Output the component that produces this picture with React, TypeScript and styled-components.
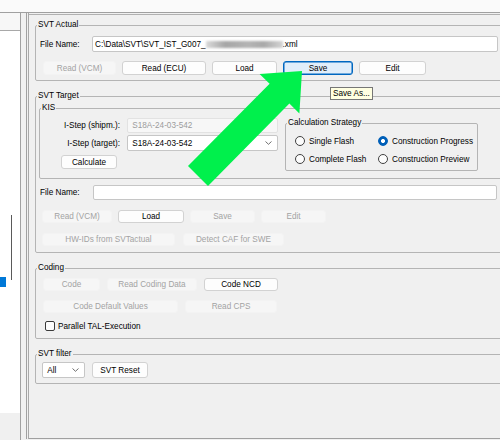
import React from 'react';
import styled, { createGlobalStyle } from 'styled-components';

const GlobalStyle = createGlobalStyle`
  html, body {
    margin: 0;
    padding: 0;
    background: #f0f0f0;
  }
  body {
    font-family: "Liberation Sans", Arial, sans-serif;
    font-size: 8.2px;
    color: #000;
  }
  * {
    box-sizing: border-box;
  }
`;

const Screen = styled.div`
  position: relative;
  width: 500px;
  height: 440px;
  overflow: hidden;
  background: #f0f0f0;
  display: flex;
  flex-direction: column;
`;

const TopBar = styled.div`
  flex: none;
  height: 13px;
  background: #fafafa;
  border-bottom: 1px solid #a0a0a0;
`;

const Workspace = styled.div`
  flex: 1;
  min-height: 0;
  display: flex;
`;

const LeftPane = styled.div`
  flex: none;
  width: 21px;
  border-right: 1px solid #a0a0a0;
  display: flex;
  flex-direction: column;
`;

const LeftHeader = styled.div`
  height: 18px;
  background: #f7f7f7;
  border-bottom: 1px solid #a8a8a8;
`;

const LeftList = styled.div`
  height: 382px;
  background: #fff;
  padding-top: 184px;
`;

const TreeLine = styled.div`
  margin-left: 11px;
  width: 1px;
  height: 65px;
  background: #5a5a5a;
`;

const SelectedItem = styled.div`
  margin-top: -3px;
  width: 6px;
  height: 10px;
  background: #0078d7;
`;

const Splitter = styled.div`
  flex: none;
  width: 5px;
`;

const MainPanel = styled.div`
  flex: none;
  width: 500px;
  height: 426px;
  padding: 7px 0 0 9px;
  display: flex;
  flex-direction: column;
  gap: 10px;
  box-shadow: inset 1px 0 0 #a0a0a0, inset 2px 0 0 #f0f0f0, inset 3px 0 0 #a8a8a8,
    inset 0 1px 0 #f0f0f0, inset 0 2px 0 #b0b0b0, inset 0 -1px 0 #a0a0a0;
`;

const Group = styled.fieldset<{ $w?: number }>`
  margin: 0;
  padding: 0;
  min-width: 0;
  border: 1px solid #b4b4b4;
  border-radius: 2px;
  ${p => (p.$w ? `width: ${p.$w}px; flex: none;` : '')}
`;

const Legend = styled.legend`
  margin-left: 1px;
  padding: 0 1px;
  height: 10px;
  line-height: 10px;
`;

const GroupBody = styled.div<{ $pad: string }>`
  padding: ${p => p.$pad};
`;

const FieldRow = styled.div<{ $mt?: number; $pl?: number }>`
  display: flex;
  align-items: center;
  margin-top: ${p => p.$mt ?? 0}px;
  padding-left: ${p => p.$pl ?? 0}px;
`;

const FieldLabel = styled.span<{ $w: number }>`
  flex: none;
  width: ${p => p.$w}px;
`;

const TextBox = styled.div<{ $w: number; $h: number; $disabled?: boolean }>`
  flex: none;
  width: ${p => p.$w}px;
  height: ${p => p.$h}px;
  display: flex;
  align-items: center;
  padding-left: 2px;
  white-space: nowrap;
  overflow: hidden;
  border-radius: 2px;
  background: ${p => (p.$disabled ? '#f7f7f7' : '#fff')};
  border: 1px solid ${p => (p.$disabled ? '#e2e2e2' : '#c6c6c6')};
  color: ${p => (p.$disabled ? '#9c9c9c' : '#000')};
`;

const Blurred = styled.span`
  display: inline-block;
  width: 77px;
  height: 7px;
  background: linear-gradient(90deg, #dadada, #a6a6a6 25%, #b4b4b4 55%, #a9a9a9 75%, #d4d4d4);
  filter: blur(1.2px);
`;

const ButtonRow = styled.div<{ $mt?: number; $pl?: number; $gap?: number }>`
  display: flex;
  gap: ${p => p.$gap ?? 6}px;
  margin-top: ${p => p.$mt ?? 0}px;
  padding-left: ${p => p.$pl ?? 0}px;
`;

const Btn = styled.button<{ $w: number; $h?: number; $focus?: boolean }>`
  flex: none;
  width: ${p => p.$w}px;
  height: ${p => p.$h ?? 13}px;
  margin: 0;
  padding: 0;
  font: inherit;
  color: #000;
  background: #fdfdfd;
  border: 1px solid #d2d2d2;
  border-radius: 3px;
  &:disabled {
    color: #a3a3a3;
    background: #f6f6f6;
    border-color: #f3f3f3;
  }
  ${p =>
    p.$focus
      ? `background: #e1eefa; border-color: #0067c0; box-shadow: inset 0 0 0 0.5px #0067c0;`
      : ''}
`;

const KisLayout = styled.div`
  display: flex;
  align-items: flex-start;
  gap: 7px;
`;

const KisGrid = styled.div`
  display: grid;
  grid-template-columns: 81px 151px;
  column-gap: 6px;
  row-gap: 2px;
  align-items: center;
`;

const KisLabel = styled.span`
  text-align: right;
  padding-right: 1px;
`;

const ComboBox = styled(TextBox)`
  justify-content: space-between;
  padding: 0 5px 0 2px;
`;

const CalcButton = styled(Btn)`
  grid-column: 1;
  justify-self: end;
  margin: 2px 4px 0 0;
`;

const RadioGrid = styled.div`
  display: grid;
  grid-template-columns: 83px auto;
  grid-auto-rows: 18px;
  align-items: center;
`;

const RadioItem = styled.label`
  display: flex;
  align-items: center;
  gap: 4px;
  white-space: nowrap;
`;

const RadioDot = styled.span<{ $on?: boolean }>`
  flex: none;
  width: 10px;
  height: 10px;
  border-radius: 50%;
  border: 1px solid ${p => (p.$on ? '#005fb8' : '#404040')};
  background: ${p =>
    p.$on ? 'radial-gradient(circle, #fff 0 1.7px, #005fb8 2.3px)' : '#fcfcfc'};
`;

const CheckRow = styled.label`
  display: flex;
  align-items: center;
  gap: 3px;
  margin-top: 8px;
  padding-left: 2px;
  height: 10px;
`;

const CheckBox = styled.span`
  flex: none;
  width: 10px;
  height: 10px;
  border: 1px solid #3a3a3a;
  border-radius: 2px;
  background: #fdfdfd;
`;

const FilterRow = styled.div`
  display: flex;
  align-items: center;
  gap: 7px;
`;

const Tooltip = styled.div`
  position: absolute;
  left: 330px;
  top: 87px;
  height: 13px;
  padding: 0 2px;
  line-height: 11px;
  white-space: nowrap;
  background: #ffffe1;
  border: 1px solid #767676;
`;

const ArrowLayer = styled.svg`
  position: absolute;
  left: 0;
  top: 0;
  pointer-events: none;
`;

const Chevron = () => (
  <svg width="7" height="4" viewBox="0 0 7 4">
    <polyline points="0.5,0.5 3.5,3.3 6.5,0.5" fill="none" stroke="#606060" strokeWidth="0.9" />
  </svg>
);

export default function App() {
  return (
    <>
      <GlobalStyle />
      <Screen>
        <TopBar />
        <Workspace>
          <LeftPane>
            <LeftHeader />
            <LeftList>
              <TreeLine />
              <SelectedItem />
            </LeftList>
          </LeftPane>
          <Splitter />
          <MainPanel>
            <Group>
              <Legend>SVT Actual</Legend>
              <GroupBody $pad="6px 0 5px 4px">
                <FieldRow>
                  <FieldLabel $w={52}>File Name:</FieldLabel>
                  <TextBox $w={406} $h={16}>
                    C:\Data\SVT\SVT_IST_G007_
                    <Blurred />
                    .xml
                  </TextBox>
                </FieldRow>
                <ButtonRow $mt={9} $pl={3}>
                  <Btn $w={73} $h={14} disabled>Read (VCM)</Btn>
                  <Btn $w={84} $h={14}>Read (ECU)</Btn>
                  <Btn $w={65} $h={14}>Load</Btn>
                  <Btn $w={70} $h={14} $focus>Save</Btn>
                  <Btn $w={67} $h={14}>Edit</Btn>
                </ButtonRow>
              </GroupBody>
            </Group>

            <Group>
              <Legend>SVT Target</Legend>
              <GroupBody $pad="2px 0 6px 3px">
                <Group>
                  <Legend>KIS</Legend>
                  <GroupBody $pad="5px 0 7px 0">
                    <KisLayout>
                      <KisGrid>
                        <KisLabel>I-Step (shipm.):</KisLabel>
                        <TextBox $w={151} $h={15} $disabled>
                          &nbsp;S18A-24-03-542
                        </TextBox>
                        <KisLabel>I-Step (target):</KisLabel>
                        <ComboBox $w={151} $h={16}>
                          <span>&nbsp;S18A-24-03-542</span>
                          <Chevron />
                        </ComboBox>
                        <CalcButton $w={56} $h={14}>Calculate</CalcButton>
                      </KisGrid>
                      <Group $w={193}>
                        <Legend>Calculation Strategy</Legend>
                        <GroupBody $pad="4px 0 2px 9px">
                          <RadioGrid>
                            <RadioItem><RadioDot />Single Flash</RadioItem>
                            <RadioItem><RadioDot $on />Construction Progress</RadioItem>
                            <RadioItem><RadioDot />Complete Flash</RadioItem>
                            <RadioItem><RadioDot />Construction Preview</RadioItem>
                          </RadioGrid>
                        </GroupBody>
                      </Group>
                    </KisLayout>
                  </GroupBody>
                </Group>
                <FieldRow $mt={6} $pl={1}>
                  <FieldLabel $w={53}>File Name:</FieldLabel>
                  <TextBox $w={404} $h={15} />
                </FieldRow>
                <ButtonRow $mt={10} $pl={3}>
                  <Btn $w={70} disabled>Read (VCM)</Btn>
                  <Btn $w={66}>Load</Btn>
                  <Btn $w={65} disabled>Save</Btn>
                  <Btn $w={65} disabled>Edit</Btn>
                </ButtonRow>
                <ButtonRow $mt={10} $pl={3} $gap={8}>
                  <Btn $w={133} disabled>HW-IDs from SVTactual</Btn>
                  <Btn $w={101} disabled>Detect CAF for SWE</Btn>
                </ButtonRow>
              </GroupBody>
            </Group>

            <Group>
              <Legend>Coding</Legend>
              <GroupBody $pad="5px 0 7px 7px">
                <ButtonRow $gap={7}>
                  <Btn $w={57} disabled>Code</Btn>
                  <Btn $w={90} disabled>Read Coding Data</Btn>
                  <Btn $w={74}>Code NCD</Btn>
                </ButtonRow>
                <ButtonRow $mt={9} $gap={7}>
                  <Btn $w={135} disabled>Code Default Values</Btn>
                  <Btn $w={92} disabled>Read CPS</Btn>
                </ButtonRow>
                <CheckRow>
                  <CheckBox />
                  Parallel TAL-Execution
                </CheckRow>
              </GroupBody>
            </Group>

            <Group>
              <Legend>SVT filter</Legend>
              <GroupBody $pad="3px 0 5px 6px">
                <FilterRow>
                  <ComboBox $w={43} $h={16}>
                    <span>&nbsp;All</span>
                    <Chevron />
                  </ComboBox>
                  <Btn $w={56} $h={16}>SVT Reset</Btn>
                </FilterRow>
              </GroupBody>
            </Group>
          </MainPanel>
        </Workspace>

        <Tooltip>Save As...</Tooltip>

        <ArrowLayer width="500" height="440" viewBox="0 0 500 440">
          <polygon
            points="188,166 269.6,83.8 259.6,74 302,71 299.4,113.4 289.4,103.6 208,186"
            fill="#00f04c"
          />
        </ArrowLayer>
      </Screen>
    </>
  );
}
